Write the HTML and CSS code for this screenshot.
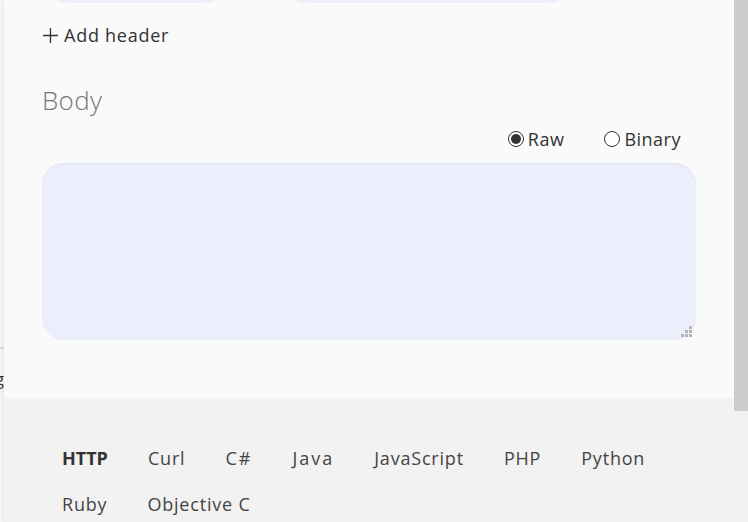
FILE: index.html
```html
<!DOCTYPE html>
<html lang="en">
<head>
<meta charset="utf-8">
<title>Request body</title>
<link rel="stylesheet" href="styles.css">
</head>
<body>
<div class="page">
  <div class="behind">
    <div class="behind-line"></div>
    <div class="behind-text">Loading</div>
  </div>
  <div class="drawer">
    <div class="drawer-content">
      <div class="header-row">
        <div class="pill pill-key"></div>
        <div class="pill pill-value"></div>
      </div>
      <div class="add-header">
        <svg class="plus" width="17" height="17" viewBox="0 0 17 17"><path d="M8.5 1v15M1 8.5h15" stroke="#333" stroke-width="1.3" fill="none"/></svg>
        <span>Add header</span>
      </div>
      <h2 class="section-title">Body</h2>
      <div class="radio-row">
        <label class="radio"><span class="radio-circle checked"><span class="radio-dot"></span></span><span>Raw</span></label>
        <label class="radio"><span class="radio-circle"></span><span>Binary</span></label>
      </div>
      <div class="body-box">
        <textarea class="body-input"></textarea>
        <svg class="grip" width="12" height="12" viewBox="0 0 12 12">
          <rect x="8" y="0" width="3" height="3" fill="#b4b4b4"/>
          <rect x="4" y="4" width="3" height="3" fill="#b4b4b4"/>
          <rect x="8" y="4" width="3" height="3" fill="#b4b4b4"/>
          <rect x="0" y="8" width="3" height="3" fill="#b4b4b4"/>
          <rect x="4" y="8" width="3" height="3" fill="#b4b4b4"/>
          <rect x="8" y="8" width="3" height="3" fill="#b4b4b4"/>
        </svg>
      </div>
    </div>
    <div class="code-panel">
      <nav class="lang-tabs">
        <span class="tab active">HTTP</span>
        <span class="tab">Curl</span>
        <span class="tab tab-wide">C#</span>
        <span class="tab tab-wide">Java</span>
        <span class="tab">JavaScript</span>
        <span class="tab">PHP</span>
        <span class="tab">Python</span>
        <span class="tab">Ruby</span>
        <span class="tab">Objective C</span>
      </nav>
    </div>
  </div>
  <div class="scrollbar">
    <div class="thumb"></div>
  </div>
</div>
</body>
</html>
```

FILE: styles.css
```css
* { box-sizing: border-box; }
html, body { margin: 0; padding: 0; }
body {
  font-family: "Open Sans", "DejaVu Sans", sans-serif;
  background: #fff;
  color: #333;
}
.page {
  display: flex;
  width: 748px;
  height: 522px;
  overflow: hidden;
}
.behind {
  width: 4px;
  flex: none;
  background: #f6f6f6;
  overflow: hidden;
  padding-top: 347px;
  position: relative;
}
.behind-line {
  height: 2px;
  background: #d6d6d6;
}
.behind-text {
  margin-top: 19px;
  font-size: 16px;
  color: #333;
  white-space: nowrap;
  direction: rtl;
  text-align: right;
  margin-left: -100px;
  width: 104px;
}
.drawer {
  flex: 1;
  background: #fafafa;
  display: flex;
  flex-direction: column;
  box-shadow: -1px 0 3px rgba(0,0,0,0.08);
  position: relative;
  z-index: 1;
  overflow: hidden;
}
.drawer-content {
  padding: 0 37px 0 38px;
  height: 398px;
  flex: none;
}
.header-row {
  display: flex;
  gap: 57px;
  margin-top: -41px;
  padding-left: 3px;
}
.pill {
  height: 44px;
  border-radius: 22px;
  background: #ebeffb;
}
.pill-key { width: 182px; }
.pill-value { width: 287px; }
.add-header {
  display: flex;
  align-items: center;
  gap: 5px;
  margin-top: 23px;
  height: 18px;
  font-size: 18px;
  color: #333;
  letter-spacing: 0.75px;
}
.plus { flex: none; }
.section-title {
  margin: 40px 0 0;
  font-size: 26px;
  font-weight: 300;
  color: #777;
  line-height: 32px;
  height: 32px;
  letter-spacing: 0.3px;
}
.radio-row {
  display: flex;
  justify-content: flex-end;
  gap: 40px;
  padding-right: 15px;
  margin-top: 10px;
  height: 26px;
  align-items: center;
}
.radio {
  display: flex;
  align-items: center;
  gap: 4px;
  font-size: 18px;
  letter-spacing: 0.5px;
  color: #333;
}
.radio-circle {
  width: 16px;
  height: 16px;
  border: 1.3px solid #333;
  border-radius: 50%;
  background: #fff;
  display: flex;
  align-items: center;
  justify-content: center;
}
.radio-dot {
  width: 10px;
  height: 10px;
  border-radius: 50%;
  background: #333;
}
.body-box {
  position: relative;
  margin-top: 11px;
  height: 177px;
}
.body-input {
  display: block;
  width: 100%;
  height: 177px;
  border: none;
  border-radius: 22px;
  background: #ebeffb;
  box-shadow: inset 0 1px 2px rgba(0,0,0,0.06);
  resize: none;
  outline: none;
  font: inherit;
}
.grip {
  position: absolute;
  right: 3px;
  bottom: 2px;
}
.code-panel {
  flex: 1;
  background: #f2f2f2;
  padding: 48px 58px 0;
}
.lang-tabs {
  display: flex;
  flex-wrap: wrap;
  column-gap: 40px;
  row-gap: 22px;
  width: 600px;
}
.tab {
  font-size: 18px;
  line-height: 24px;
  color: #444;
  letter-spacing: 0.8px;
}
.tab-wide {
  letter-spacing: 2px;
}
.tab.active {
  font-weight: 700;
  color: #333;
  letter-spacing: 0;
}
.scrollbar {
  width: 15px;
  flex: none;
  background: #f1f1f1;
  border-left: 1px solid #fafafa;
}
.thumb {
  height: 411px;
  background: #cdcdcd;
}
```
